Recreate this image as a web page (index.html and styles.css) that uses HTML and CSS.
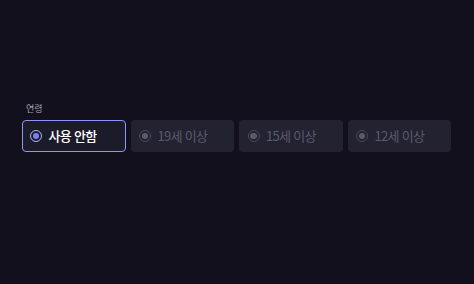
FILE: index.html
```html
<!DOCTYPE html>
<html lang="ko">
<head>
<meta charset="utf-8">
<link rel="stylesheet" href="styles.css">
</head>
<body>
<div class="page">
  <div class="field">
    <div class="label">연령</div>
    <div class="options">
      <div class="option selected"><span class="radio"></span><span class="text">사용 안함</span></div>
      <div class="option disabled"><span class="radio"></span><span class="text">19세 이상</span></div>
      <div class="option disabled"><span class="radio"></span><span class="text">15세 이상</span></div>
      <div class="option disabled"><span class="radio"></span><span class="text">12세 이상</span></div>
    </div>
  </div>
</div>
</body>
</html>
```

FILE: styles.css
```css
html, body {
  margin: 0;
  padding: 0;
  background: #11101c;
}
.page {
  width: 474px;
  height: 284px;
  box-sizing: border-box;
  padding: 103px 23px 0 22px;
  font-family: "Noto Sans CJK KR", "Noto Sans", sans-serif;
}
.label {
  font-size: 9px;
  line-height: 12px;
  color: #a3a2b1;
  padding-left: 4px;
  margin-bottom: 5px;
}
.options {
  display: grid;
  grid-template-columns: repeat(4, 1fr);
  gap: 5px;
}
.option {
  height: 32px;
  box-sizing: border-box;
  border-radius: 4px;
  display: flex;
  align-items: center;
  padding-left: 8.5px;
  gap: 6.5px;
  font-size: 13px;
  letter-spacing: -0.7px;
}
.option.selected {
  background: #1c1b29;
  border: 1.5px solid #8f95f4;
  color: #ffffff;
  font-weight: 500;
  padding-left: 7px;
}
.option.disabled {
  background: #232231;
  color: #5b5a6a;
  font-weight: 400;
}
.radio {
  width: 12px;
  height: 12px;
  border-radius: 50%;
  box-sizing: border-box;
  display: flex;
  align-items: center;
  justify-content: center;
  flex: none;
}
.selected .radio {
  border: 1.7px solid #b0b6ff;
}
.selected .radio::after {
  content: "";
  width: 6.5px;
  height: 6.5px;
  border-radius: 50%;
  background: #7b7ff7;
}
.disabled .radio {
  border: 1.8px solid #4a4957;
}
.disabled .radio::after {
  content: "";
  width: 6.5px;
  height: 6.5px;
  border-radius: 50%;
  background: #5c5b69;
}
.text {
  line-height: 16px;
}
```
